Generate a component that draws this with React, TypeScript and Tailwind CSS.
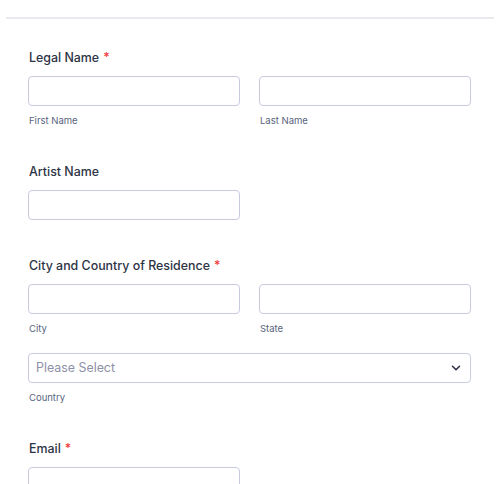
import { ChevronDown } from "lucide-react";

function Label({ text, required }: { text: string; required?: boolean }) {
  return (
    <label className="block pl-px text-[12.4px] leading-5 font-medium text-[#2c3345]">
      {text}
      {required && <span className="ml-1 text-[#f23a3c]">*</span>}
    </label>
  );
}

function Sub({ text }: { text: string }) {
  return <p className="mt-2 pl-px text-[9.5px] leading-[14px] text-[#57647e]">{text}</p>;
}

function Input() {
  return (
    <input
      type="text"
      className="block h-[30px] w-full rounded-[4px] border border-[#c8cbe0] bg-white px-2 text-sm outline-none"
    />
  );
}

export default function App() {
  return (
    <div className="min-h-[484px] bg-white font-['Inter',sans-serif]">
      <div className="pt-[17px]">
        <div className="mx-[6px] h-[2px] bg-[#e9eaee]" />
      </div>

      <div className="pl-[28px] pr-[29px] pt-[29px]">
        <div>
          <Label text="Legal Name" required />
          <div className="mt-2 grid grid-cols-2 gap-[19px]">
            <div>
              <Input />
              <Sub text="First Name" />
            </div>
            <div>
              <Input />
              <Sub text="Last Name" />
            </div>
          </div>
        </div>

        <div className="mt-[34px]">
          <Label text="Artist Name" />
          <div className="mt-2 w-[212px]">
            <Input />
          </div>
        </div>

        <div className="mt-[36px]">
          <Label text="City and Country of Residence" required />
          <div className="mt-2 grid grid-cols-2 gap-[19px]">
            <div>
              <Input />
              <Sub text="City" />
            </div>
            <div>
              <Input />
              <Sub text="State" />
            </div>
          </div>
          <div className="mt-[17px]">
            <div className="flex h-[30px] w-full items-center justify-between rounded-[4px] border border-[#c8cbe0] bg-white pl-[7px] pr-[7px]">
              <span className="text-[12.4px] text-[#8d8fa8]">Please Select</span>
              <ChevronDown className="h-3.5 w-3.5 text-[#2c3345]" strokeWidth={2.75} />
            </div>
            <Sub text="Country" />
          </div>
        </div>

        <div className="mt-[34px]">
          <Label text="Email" required />
          <div className="mt-2 w-[212px]">
            <Input />
          </div>
        </div>
      </div>
    </div>
  );
}
